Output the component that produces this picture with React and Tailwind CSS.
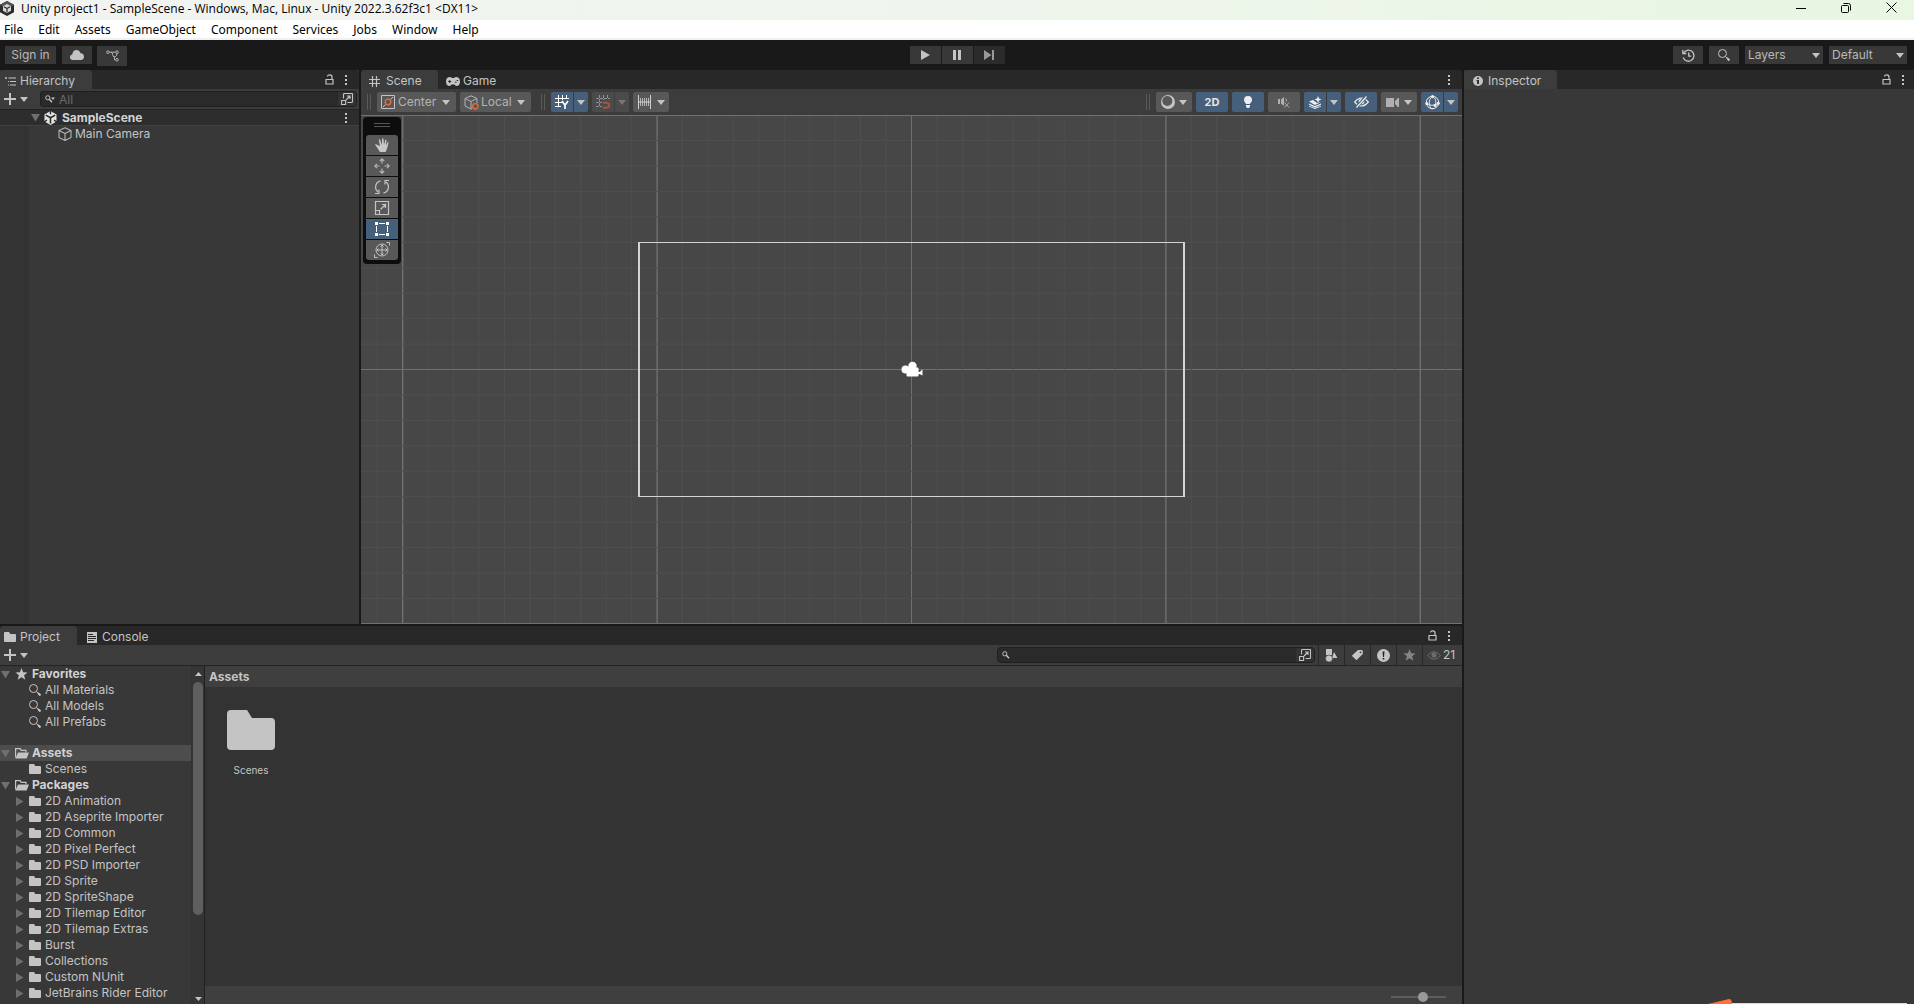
import React from "react";

const MENUS = ["File", "Edit", "Assets", "GameObject", "Component", "Services", "Jobs", "Window", "Help"];
const PACKAGES = [
  "2D Animation", "2D Aseprite Importer", "2D Common", "2D Pixel Perfect", "2D PSD Importer",
  "2D Sprite", "2D SpriteShape", "2D Tilemap Editor", "2D Tilemap Extras", "Burst",
  "Collections", "Custom NUnit", "JetBrains Rider Editor",
];

function Icon({ size = 16, className = "", children }) {
  return (
    <svg width={size} height={size} viewBox={`0 0 ${size} ${size}`} className={`shrink-0 ${className}`} fill="none" stroke="#c4c4c4" aria-hidden="true">
      {children}
    </svg>
  );
}

const Caret = ({ className = "text-[#c4c4c4]" }) => (
  <svg width="8" height="5" viewBox="0 0 8 5" className={`shrink-0 ${className}`} aria-hidden="true">
    <path d="M0 0h8L4 5z" fill="currentColor" />
  </svg>
);

const Dots = () => (
  <button aria-label="Menu" className="flex h-4 w-2 items-center justify-center">
    <svg width="2" height="10" viewBox="0 0 2 10"><path d="M0 0h2v2H0zM0 4h2v2H0zM0 8h2v2H0z" fill="#c4c4c4" /></svg>
  </button>
);

const Lock = () => (
  <button aria-label="Lock">
    <svg width="9" height="11" viewBox="0 0 9 11" fill="none" stroke="#c4c4c4" className="block">
      <path d="M1 5.500h7v4.500H1zM2.500 2.500C2.500 .3 7 .2 7 3v2.500" strokeWidth="1.200" />
    </svg>
  </button>
);

const Handle = () => <div className="h-4 w-1 shrink-0 border-x border-[#5a5a5a]" />;

const Plus = () => (
  <button aria-label="Create" className="flex items-center gap-1">
    <svg width="12" height="12" viewBox="0 0 12 12"><path d="M5 0h2v5h5v2H7v5H5V7H0V5h5z" fill="#c4c4c4" /></svg>
    <Caret />
  </button>
);

const Triangle = ({ open = false }) => (
  <svg width="9" height="9" viewBox="0 0 9 9" className="shrink-0" aria-hidden="true">
    <path d={open ? "M0 1h9L4.500 8.500z" : "M1 0v9l7.500-4.500z"} fill="#6f6f6f" />
  </svg>
);

const Folder = () => (
  <svg width="12" height="10" viewBox="0 0 12 10" className="shrink-0" aria-hidden="true">
    <path d="M0 1q0-1 1-1h4l1.300 2H11q1 0 1 1v6q0 1-1 1H1q-1 0-1-1z" fill="#c4c4c4" />
  </svg>
);

const OpenFolder = () => (
  <svg width="14" height="11" viewBox="0 0 14 11" className="shrink-0" fill="none" aria-hidden="true">
    <path d="M.6 9.500V.6h4.600l1 1.800h4.800v1.800" stroke="#c4c4c4" strokeWidth="1.200" />
    <path d="M3 4.500h11l-2.400 6H.4z" fill="#c4c4c4" />
  </svg>
);

const Magnifier = () => (
  <svg width="12" height="12" viewBox="0 0 12 12" className="shrink-0" fill="none" stroke="#c4c4c4" aria-hidden="true">
    <circle cx="4.500" cy="4.500" r="4" />
    <path d="M7.500 7.500l1.500 1.500" />
    <path d="M9 9l2.500 2.500" strokeWidth="2" />
  </svg>
);

const SmallMagnifier = ({ menu = false }) => (
  <svg width="10" height="8" viewBox="0 0 10 8" className="shrink-0" fill="none" stroke="#c4c4c4" aria-hidden="true">
    <circle cx="2.800" cy="2.800" r="2.100" />
    <path d="M4.300 4.300l2.700 2.900" strokeWidth="1.400" />
    {menu && <path d="M6 2.500h4L8 5z" fill="#c4c4c4" stroke="none" />}
  </svg>
);

const PopOut = () => (
  <svg width="12" height="12" viewBox="0 0 12 12" fill="none" stroke="#c4c4c4" aria-hidden="true">
    <path d="M2.500 5.500v-4q0-1 1-1h7q1 0 1 1v7q0 1-1 1h-4M.6 7.500h4v4h-4zM5 7l4-4M6 3h3v3" strokeWidth="1.100" />
  </svg>
);

const UnityMark = () => (
  <svg width="13" height="14" viewBox="0 0 13 14" className="shrink-0" fill="none" aria-hidden="true">
    <path d="M6.500 0L12.500 3.500v7L6.500 14 .5 10.500v-7z" fill="#e4e4e4" />
    <path d="M6.500 6.800v5.800M6.500 6.800L1.800 4.100M6.500 6.800l4.700-2.700" stroke="#2c2c2c" strokeWidth="1.600" />
    <path d="M6.500 0v3.200M0 11l3-1.800M13 11l-3-1.800" stroke="#2c2c2c" strokeWidth="1.400" />
  </svg>
);

const Cube = ({ className = "" }) => (
  <svg width="14" height="14" viewBox="0 0 14 14" className={`shrink-0 ${className}`} fill="none" stroke="#b4b4b4" strokeLinejoin="round" aria-hidden="true">
    <path d="M7 .7l6 2.800v7L7 13.400 1 10.500v-7zM1 3.500l6 2.900 6-2.900M7 6.400v7" strokeWidth="1.100" />
  </svg>
);

function Tab({ active, className = "", icon, children }) {
  return (
    <button role="tab" aria-selected={!!active} className={`flex h-full shrink-0 items-center gap-1 pt-[3px] ${active ? "rounded-t-[3px] bg-[#3c3c3c]" : ""} ${className}`}>
      {icon}
      <span>{children}</span>
    </button>
  );
}

const TabBar = ({ children }) => (
  <div role="tablist" className="flex h-[19px] shrink-0 rounded-t-[3px] bg-[#282828]">{children}</div>
);

function ToolButton({ on, label, className = "w-8", children }) {
  return (
    <button aria-label={label} className={`flex h-5 shrink-0 items-center justify-center rounded-[2px] ${on ? "bg-[#46607c]" : "bg-[#585858]"} ${className}`}>
      {children}
    </button>
  );
}

function SplitButton({ on, dim, label, children }) {
  const bg = on ? "bg-[#46607c]" : dim ? "bg-[#4b4b4b]" : "bg-[#585858]";
  return (
    <div className="flex gap-px">
      <button aria-label={label} className={`flex h-5 w-[22px] items-center justify-center rounded-l-[2px] ${bg}`}>{children}</button>
      <button aria-label={`${label} options`} className={`flex h-5 w-[14px] items-center justify-center rounded-r-[2px] ${bg}`}>
        <Caret className={dim ? "text-[#777]" : "text-[#c4c4c4]"} />
      </button>
    </div>
  );
}

function ModeSelect({ label, options, className, icon }) {
  return (
    <label className={`relative flex h-5 items-center rounded-[2px] bg-[#585858] pl-1 ${className}`}>
      {icon}
      <select aria-label={label} className="absolute inset-0 appearance-none bg-transparent pl-[21px] text-xs text-[#b4b4b4] outline-none">
        {options.map((o) => <option key={o}>{o}</option>)}
      </select>
      <span className="pointer-events-none absolute inset-y-0 right-1.5 flex items-center"><Caret /></span>
    </label>
  );
}

function TopSelect({ name }) {
  return (
    <label className="relative h-[18px] w-[78px] bg-[#383838]">
      <select aria-label={name} className="absolute inset-0 w-full appearance-none bg-transparent pl-[3px] text-xs text-[#b8b8b8] outline-none">
        <option>{name}</option>
      </select>
      <span className="pointer-events-none absolute inset-y-0 right-[3px] flex items-center"><Caret /></span>
    </label>
  );
}

function TitleBar() {
  return (
    <header className="flex h-5 shrink-0 items-start bg-linear-to-r from-[#f2f3f1] via-[#eff5ed] to-[#e8f6e2] text-black">
      <svg width="14" height="15" viewBox="0 0 14 15" className="mt-px shrink-0" fill="none" aria-hidden="true">
        <path d="M7 0l7 3.800v7.400L7 15 0 11.200V3.800z" fill="#2c2c2c" />
        <path d="M7 0l7 3.800-7 3.700-7-3.700z" fill="#555" />
        <path d="M7 3l4 2.200v4.600L7 12 3 9.800V5.200z" fill="#d8d8d8" />
        <path d="M7 7.500v3.700M7 7.500L4 5.800M7 7.500l3-1.700" stroke="#2c2c2c" strokeWidth="1.200" />
      </svg>
      <h1 className="ml-[7px] flex-1 font-['Open_Sans',sans-serif] text-xs leading-[17px]">
        Unity project1 - SampleScene - Windows, Mac, Linux - Unity 2022.3.62f3c1 &lt;DX11&gt;
      </h1>
      <div className="flex h-[15px]">
        <button aria-label="Minimize" className="flex w-[45px] items-center justify-center"><svg width="10" height="10" viewBox="0 0 10 10" stroke="#000"><path d="M0 5.500h10" /></svg></button>
        <button aria-label="Restore" className="flex w-[46px] items-center justify-center"><svg width="10" height="10" viewBox="0 0 10 10" fill="none" stroke="#000"><rect x=".5" y="2.500" width="7" height="7" rx="1" /><path d="M2.500.5h5q2 0 2 2v5" /></svg></button>
        <button aria-label="Close" className="flex w-[45px] items-center justify-center"><svg width="11" height="11" viewBox="0 0 11 11" stroke="#000"><path d="M.5.5l10 10M10.500.5l-10 10" /></svg></button>
      </div>
    </header>
  );
}

function MainToolbar() {
  const box = "flex h-[18px] w-[30px] items-center justify-center bg-[#383838]";
  return (
    <div className="grid h-[30px] shrink-0 grid-cols-[1fr_auto_1fr] bg-[#191919] pt-1.5">
      <div className="flex items-start pl-[5px]">
        <button className="h-[18px] w-[51px] bg-[#383838] text-[#b8b8b8]">Sign in</button>
        <button aria-label="Cloud services" className={`ml-1.5 ${box}`}>
          <svg width="14" height="10" viewBox="0 0 14 10"><path d="M3 10C1 10 0 8.700 0 7.200 0 5.700 1 4.700 2.300 4.500 2.400 2 4.200 0 6.500 0 8.700 0 10 1.300 10.600 3.300 12.800 3.400 14 5 14 6.700 14 8.600 12.700 10 11 10z" fill="#c4c4c4" /></svg>
        </button>
        <button aria-label="Version control" className="ml-[5px] flex h-5 w-[30px] items-center justify-center bg-[#383838]">
          <svg width="13" height="12" viewBox="0 0 13 12" fill="none" stroke="#b0b0b0">
            <circle cx="1.900" cy="2.200" r="1.300" /><circle cx="11" cy="2.200" r="1.300" /><circle cx="11" cy="9.800" r="1.300" />
            <path d="M3.200 2.200h6.500M5 2.200c2.500 0 1 4.800 3 4.800h.5v2.800h1.200M8 7c1.500 0 2.800-1 3-3.500" />
          </svg>
        </button>
      </div>
      <div className="flex items-start gap-px">
        <button aria-label="Play" className="flex h-[18px] w-[31px] items-center justify-center bg-[#383838]"><svg width="9" height="10" viewBox="0 0 9 10"><path d="M0 0l9 5-9 5z" fill="#c4c4c4" /></svg></button>
        <button aria-label="Pause" className="flex h-[18px] w-[31px] items-center justify-center bg-[#383838]"><svg width="8" height="10" viewBox="0 0 8 10"><path d="M0 0h3v10H0zM5 0h3v10H5z" fill="#c4c4c4" /></svg></button>
        <button aria-label="Step" className="flex h-[18px] w-[31px] items-center justify-center bg-[#2b2b2b]"><svg width="10" height="10" viewBox="0 0 10 10"><path d="M0 0l7.500 5L0 10zM8 0h2v10H8z" fill="#999" /></svg></button>
      </div>
      <div className="flex items-start justify-end gap-1.5 pr-[7px]">
        <button aria-label="Undo history" className={box}>
          <svg width="13" height="13" viewBox="0 0 13 13" fill="none" stroke="#c4c4c4"><path d="M1.500 4.200A5.500 5.500 0 1 1 1.200 8.500" strokeWidth="1.300" /><path d="M.8 1v3.500h3.500M6.700 3.500v3.700h2.500" strokeWidth="1.300" /></svg>
        </button>
        <button aria-label="Search" className={box}><Magnifier /></button>
        <TopSelect name="Layers" />
        <TopSelect name="Default" />
      </div>
    </div>
  );
}

function Hierarchy() {
  return (
    <section aria-label="Hierarchy" className="flex w-[359px] shrink-0 flex-col bg-[#383838]">
      <TabBar>
        <Tab active className="w-[92px] pl-[5px]" icon={
          <svg width="11" height="9" viewBox="0 0 11 9" stroke="#c4c4c4"><path d="M0 1h2M3.500 1H11M3 4.500h1M5 4.500h6M3 8h1M5 8h6M1 0v2" /></svg>
        }>Hierarchy</Tab>
        <div className="ml-auto flex items-center gap-2 pr-[9px]"><Lock /><Dots /></div>
      </TabBar>
      <div className="flex h-[21px] shrink-0 items-center border-b border-[#232323] bg-[#3c3c3c] pr-0.5 pl-1">
        <Plus />
        <div className="ml-3 flex h-4 flex-1 items-center overflow-hidden rounded-[3px] border border-[#1f1f1f] bg-[#2a2a2a] pl-1">
          <SmallMagnifier menu />
          <input aria-label="Search hierarchy" placeholder="All" className="ml-1 min-w-0 flex-1 bg-transparent text-xs leading-3 text-[#c4c4c4] outline-none placeholder:text-[#6a6a6a]" />
          <button aria-label="Open in search" className="flex h-full w-[18px] items-center justify-center bg-[#333]"><PopOut /></button>
        </div>
      </div>
      <div className="flex h-4 shrink-0 items-center border-b border-[#414141] bg-[#2d2d2d] pr-[9px] pl-[31px] font-bold text-[#d4d4d4]">
        <Triangle open />
        <span className="ml-1 flex flex-1 items-center gap-[5px]"><UnityMark />SampleScene</span>
        <Dots />
      </div>
      <div className="flex min-h-0 flex-1">
        <div className="w-[29px] bg-[#333]" />
        <div className="flex h-4 items-center gap-[3px] pl-[29px]"><Cube />Main Camera</div>
      </div>
    </section>
  );
}

/* World grid around the origin: 10 minor cells per major cell, with the camera frame on top. */
function SceneGrid() {
  const cell = 25.44;
  const steps = Array.from({ length: 81 }, (_, i) => i - 40);
  return (
    <svg className="absolute inset-0 h-full w-full bg-[#474747]" role="img" aria-label="Scene view">
      <svg x="50%" y="50%" overflow="visible">
        {steps.map((i) => (
          <g key={i}>
            <path d={`M${i * cell} -600V600`} stroke={i % 10 === 0 ? "#707070" : "#4f4f4f"} strokeWidth={i % 10 === 0 && i !== 0 ? 1.4 : 1} />
            <path d={`M-1200 ${i * cell}H1200`} stroke={i === 0 ? "#707070" : "#4f4f4f"} />
          </g>
        ))}
        <path d="M-272.500-127.500V127.500M272.500-127.500V127.500" stroke="#d4d4d4" strokeWidth="2" />
        <path d="M-273-127H273M-273 127H273" stroke="#d4d4d4" />
        <g fill="#fff">
          <circle cx="-6" cy="0" r="4" /><circle cx="1" cy="-3.500" r="4.200" />
          <rect x="-5" y="-2" width="12" height="9" rx="1" /><path d="M6 2l2 .5L11 0v6L8 4.500 6 5z" />
        </g>
      </svg>
    </svg>
  );
}

const TOOLS = [
  ["Hand", <path key="p" d="M4.500 8.500L1.700 7q-.8.300-.3 1L5 13.500q.5 1.500 1.500 1.500H11q1 0 1.300-1.500L13.500 10 14.600 5.500q-.2-1-1-.3L12 8.500 12.500 3q-.5-1-1.300 0L10 8 9.500 1.700q-.7-1-1.400 0L7.800 8 6 2.500q-.9-.7-1.300.2L6 9z" fill="#c8c8c8" stroke="none" />],
  ["Move", <g key="p" stroke="#b4b4b4" strokeWidth="1.200"><path d="M8 1v4.500M8 10.500V15M1 8h4.500M10.500 8H15M5.800 3L8 .8 10.200 3M5.800 13L8 15.200l2.200-2.200M3 5.800L.8 8 3 10.200M13 5.800L15.200 8 13 10.200" /></g>],
  ["Rotate", <g key="p" strokeWidth="1.200"><path d="M6.500 1.800A6.400 6.400 0 0 0 4 13M9.500 14.200A6.400 6.400 0 0 0 12 3M1 14.500h4v-4M15 1.500h-4v4" /></g>],
  ["Scale", <g key="p"><path d="M1.500 1.500h13v13h-13zM1.500 10.500h4v4M6.500 9.500L12 4M8 4.500h3.500V8" strokeWidth="1.200" /></g>],
  ["Rect", <g key="p"><path d="M5 2.500h6M5 13.500h6M2.500 5v6M13.500 5v6" stroke="#fff" /><path d="M1 1h3v3H1zM12 1h3v3h-3zM1 12h3v3H1zM12 12h3v3h-3z" fill="#fff" stroke="none" /></g>],
  ["Transform", <g key="p"><circle cx="8" cy="8" r="6" /><path d="M8 3v10M3 8h10M6.500 4.500L8 3l1.500 1.500M6.500 11.500L8 13l1.500-1.500M4.500 6.500L3 8l1.500 1.500M11.500 6.500L13 8l-1.500 1.500" /><path d="M12.500.5h3v3M.5 12.500v3h3" /></g>],
];

function Scene() {
  return (
    <section aria-label="Scene" className="flex min-w-0 flex-1 flex-col">
      <TabBar>
        <Tab active className="w-[77px] gap-[6px] pl-2" icon={
          <svg width="11" height="11" viewBox="0 0 11 11" stroke="#c4c4c4"><path d="M3.500 0v11M7.500 0v11M0 3.500h11M0 7.500h11" strokeWidth="1.200" /></svg>
        }>Scene</Tab>
        <Tab className="gap-[3px] pl-2" icon={
          <svg width="14" height="9" viewBox="0 0 14 9"><path d="M3.500 0Q5 0 6 1h2q1-1 2.500-1Q14 .4 14 4.500T11 9Q9.500 9 8.500 7.500h-3Q4.500 9 3 9 0 8.600 0 4.500T3.500 0z" fill="#c4c4c4" /><path d="M2.200 4.500h3M3.700 3v3M9 5.200h1.500M10.700 3.500h1.500" stroke="#282828" /></svg>
        }>Game</Tab>
        <div className="ml-auto flex items-center pr-[9px]"><Dots /></div>
      </TabBar>

      <div className="flex h-[26px] shrink-0 items-center gap-1 bg-[#3c3c3c] pr-1 pl-1.5">
        <Handle />
        <div className="ml-0.5 flex gap-1">
          <ModeSelect label="Tool handle position" options={["Center", "Pivot"]} className="w-[79px]" icon={
            <svg width="14" height="14" viewBox="0 0 14 14" fill="none" stroke="#c4c4c4"><path d="M.5.5h13v13H.5zM2 12l2.500-2.500M9.500 4.500L12 2" /><circle cx="7" cy="7" r="2.800" stroke="#f0683c" strokeWidth="1.300" /></svg>
          } />
          <ModeSelect label="Tool handle rotation" options={["Local", "Global"]} className="w-[71px]" icon={
            <svg width="15" height="15" viewBox="0 0 15 15" fill="none" stroke="#b4b4b4" strokeLinejoin="round"><path d="M8 13.500l-1 .5-6-3V3.500L7 .8l6 2.700V8M1 3.500l6 2.900 6-2.900M7 6.400V14" /><circle cx="11.300" cy="11.300" r="2.700" stroke="#f0683c" strokeWidth="1.300" /></svg>
          } />
        </div>
        <div className="ml-1.5"><Handle /></div>
        <div className="ml-0.5 flex gap-1">
          <SplitButton on label="Grid visibility">
            <Icon><path d="M4.500 1v12M8.500 1v5M12.500 1v4M1 4.500h14M1 8.500h7M1 12.500h6" stroke="#fff" /><path d="M8 7l3 4.200L14 7M11 11v4" stroke="#fff" strokeWidth="1.700" /></Icon>
          </SplitButton>
          <SplitButton dim label="Grid snapping">
            <Icon><path d="M4.500 1v12M8.500 1v5M12.500 1v4M1 4.500h14M1 8.500h6M1 12.500h6" stroke="#909090" strokeDasharray="3 1" /><path d="M8 8.700h3.500a2.500 2.500 0 0 1 0 5H8" stroke="#a8553d" strokeWidth="2" /></Icon>
          </SplitButton>
          <ToolButton label="Snap increment" className="w-9 gap-1.5">
            <svg width="13" height="14" viewBox="0 0 13 14" stroke="#d0d0d0"><path d="M.5 0v14M12.500 0v14M0 7h13" /><path d="M2.500 3v8M4.500 3v8M6.500 3v8M8.500 3v8M10.500 3v8" strokeOpacity=".8" /></svg>
            <Caret />
          </ToolButton>
        </div>
        <div className="ml-auto"><Handle /></div>
        <div className="ml-0.5 flex gap-1">
          <ToolButton label="Draw mode" className="w-9 gap-1">
            <svg width="14" height="14" viewBox="0 0 14 14"><circle cx="7" cy="7" r="7" fill="#c4c4c4" /><circle cx="6.300" cy="6" r="5" fill="#585858" /></svg>
            <Caret />
          </ToolButton>
          <ToolButton on label="2D view"><span className="text-[11px] font-bold text-[#e4e4e4]">2D</span></ToolButton>
          <ToolButton on label="Scene lighting">
            <svg width="8" height="12" viewBox="0 0 8 12" fill="#eee"><path d="M4 0a4 4 0 0 1 4 4c0 2-1.500 2.500-2 4H2C1.500 6.500 0 6 0 4a4 4 0 0 1 4-4zM2 9h4v1.500L5 12H3l-1-1.500z" /></svg>
          </ToolButton>
          <ToolButton label="Audio">
            <svg width="12" height="11" viewBox="0 0 12 11" fill="#b0b0b0"><path d="M0 2h2v5H0zM3 2.500L6 0v9L3 6.500z" /><path d="M6.500 5.500l4.500 5M11 5.500l-4.500 5M7.500 1.500q1.500 1 1 3" stroke="#b0b0b0" fill="none" /></svg>
          </ToolButton>
          <SplitButton on label="Effects">
            <svg width="13" height="13" viewBox="0 0 13 13" fill="#eee"><path d="M0 5.500L4 4l4 3 4-1-6 3zM0 7.500l6 2.500 6-2.500v1.200L6 11.500 0 8.700zM0 9.800l6 2.200 6-2.200v.8L6 13 0 10.600zM9 0l1 2.500L12.500 3.500 10 4.500 9 7 8 4.500 5.500 3.500 8 2.500z" /></svg>
          </SplitButton>
          <ToolButton on label="Hidden objects">
            <svg width="15" height="12" viewBox="0 0 15 12" fill="none" stroke="#eee"><path d="M.7 6Q7.500-2 14.300 6 7.500 14 .7 6z" strokeWidth="1.200" /><circle cx="7.500" cy="5.500" r="2.500" fill="#eee" /><path d="M2 12L12.500 0" stroke="#46607c" strokeWidth="3" /><path d="M2.500 11.500L12.500.5" strokeWidth="1.200" /></svg>
          </ToolButton>
          <ToolButton label="Camera settings" className="w-9 gap-[5px]">
            <svg width="13" height="9" viewBox="0 0 13 9" fill="#b0b0b0"><path d="M0 0h8v9H0zM9 3l3-3h1v9h-1L9 6z" /></svg>
            <Caret />
          </ToolButton>
          <SplitButton on label="Gizmos">
            <svg width="15" height="15" viewBox="0 0 15 15" className="shrink-0" fill="none" stroke="#eee"><circle cx="7.500" cy="7.500" r="6.200" /><path d="M7.500 1.300Q3.500 4 4.500 9.500T8 13.500M7.500 1.300q5 3.200 2.500 9M1.500 8.500q5 3.500 12 0" strokeWidth=".9" /><g fill="#eee" stroke="none"><circle cx="7.500" cy="1.600" r="1.600" /><circle cx="1.800" cy="8.500" r="1.500" /><circle cx="13.200" cy="8.300" r="1.500" /><circle cx="10" cy="10.500" r="1.500" /></g></svg>
          </SplitButton>
        </div>
      </div>

      <div className="relative min-h-0 flex-1 overflow-hidden border-y border-[#707070]">
        <SceneGrid />
        <div className="absolute top-px left-0.5 flex flex-col rounded-[4px] bg-[#0d0d0d] px-[3px] pb-1">
          <div className="flex h-[18px] justify-center pt-1.5"><div className="h-1 w-4 border-y border-[#555]" /></div>
          <div className="flex flex-col gap-px overflow-hidden rounded-[3px]">
            {TOOLS.map(([name, art]) => (
              <button key={name} aria-label={`${name} tool`} aria-pressed={name === "Rect"} className={`flex h-5 w-8 items-center justify-center ${name === "Rect" ? "bg-[#46607c]" : "bg-[#585858]"}`}>
                <Icon>{art}</Icon>
              </button>
            ))}
          </div>
        </div>
      </div>
    </section>
  );
}

function TreeRow({ level = 0, open, icon, bold, selected, children }) {
  const pad = level === 0 ? "pl-px" : open === undefined ? "pl-[29px]" : "pl-[15px]";
  return (
    <li className={`flex h-4 shrink-0 items-center whitespace-nowrap ${pad} ${bold ? "font-bold text-[#d2d2d2]" : ""} ${selected ? "bg-[#4d4d4d]" : ""}`}>
      {open !== undefined && <span className="mr-[5px]"><Triangle open={open} /></span>}
      <span className={`flex items-center ${level === 0 ? "gap-[3px]" : "gap-1"}`}>{icon}{children}</span>
    </li>
  );
}

const Arrow = ({ down }) => (
  <svg width="7" height="4" viewBox="0 0 7 4" className="block" aria-hidden="true"><path d={down ? "M0 0h7L3.500 4z" : "M0 4h7L3.500 0z"} fill="#c4c4c4" /></svg>
);

function Project() {
  const cell = "flex w-[26px] items-center justify-center border-l border-[#282828]";
  return (
    <section aria-label="Project" className="flex min-h-0 flex-[378_378_0%] flex-col">
      <TabBar>
        <Tab active className="w-[77px] pl-1" icon={<Folder />}>Project</Tab>
        <Tab className="gap-[5px] pl-2.5" icon={
          <svg width="10" height="11" viewBox="0 0 10 11"><path d="M0 0h10v11H0z" fill="#c4c4c4" /><path d="M1 2.500h5M1 4.500h8M1 6.500h8M1 8.500h6" stroke="#282828" /></svg>
        }>Console</Tab>
        <div className="ml-auto flex items-center gap-2 pr-[9px]"><Lock /><Dots /></div>
      </TabBar>
      <div className="flex h-[21px] shrink-0 items-stretch border-b border-[#232323] bg-[#3c3c3c] pl-1">
        <Plus />
        <div className="mt-0.5 mr-[3px] ml-auto flex h-4 w-[318px] items-center overflow-hidden rounded-[4px] border border-[#1f1f1f] bg-[#2a2a2a] pl-1">
          <SmallMagnifier />
          <input aria-label="Search project" className="min-w-0 flex-1 bg-transparent text-xs leading-3 text-[#c4c4c4] outline-none" />
          <button aria-label="Open in search" className="flex h-full w-[18px] items-center justify-center bg-[#333]"><PopOut /></button>
        </div>
        <button aria-label="Search by type" className={cell}>
          <svg width="13" height="13" viewBox="0 0 13 13" fill="#c4c4c4"><path d="M1 0h6v6H1zM9 3l3.500 6H7z" /><circle cx="4" cy="9.500" r="3.500" stroke="#3c3c3c" strokeWidth=".6" /></svg>
        </button>
        <button aria-label="Search by label" className={cell}>
          <svg width="11" height="10" viewBox="0 0 11 10"><path d="M6 0h3.500q1.300 0 1.300 1.300V4L5 9.700q-.5.500-1 0L.3 6.300q-.5-.5 0-1z" fill="#c4c4c4" /><circle cx="8.500" cy="2.300" r=".9" fill="#3c3c3c" /></svg>
        </button>
        <button aria-label="Search by import log" className={cell}>
          <svg width="13" height="13" viewBox="0 0 13 13"><circle cx="6.500" cy="6.500" r="6.500" fill="#c4c4c4" /><path d="M5.500 2.500h2L7 8H6zM5.700 9h1.600v1.600H5.700z" fill="#222" /></svg>
        </button>
        <button aria-label="Save search" className={cell}>
          <svg width="13" height="12" viewBox="0 0 13 12"><path d="M6.500 0l1.600 4.200 4.400.3-3.400 2.800 1.200 4.400-3.800-2.500-3.800 2.500 1.200-4.400L.5 4.500l4.400-.3z" fill="#858585" /></svg>
        </button>
        <button aria-label="Hidden packages" className="flex w-10 items-center gap-0.5 border-l border-[#282828] pl-1">
          <svg width="14" height="9" viewBox="0 0 14 9" className="shrink-0" fill="none" stroke="#6c6c6c"><path d="M.6 4.500Q7-3 13.400 4.500 7 12 .6 4.500z" /><circle cx="7" cy="4" r="2.600" fill="#6c6c6c" stroke="none" /></svg>
          21
        </button>
      </div>
      <div className="flex min-h-0 flex-1">
        <ul className="flex w-[191px] flex-col overflow-hidden bg-[#383838]">
          <TreeRow open bold icon={<svg width="13" height="12" viewBox="0 0 13 12" className="mr-px"><path d="M6.500 0l1.600 4.200 4.400.3-3.400 2.800 1.200 4.400-3.800-2.500-3.800 2.500 1.200-4.400L.5 4.500l4.400-.3z" fill="#c4c4c4" /></svg>}>Favorites</TreeRow>
          {["All Materials", "All Models", "All Prefabs"].map((n) => <TreeRow key={n} level={1} icon={<Magnifier />}>{n}</TreeRow>)}
          <li aria-hidden="true" className="h-[15px] shrink-0" />
          <TreeRow open bold selected icon={<OpenFolder />}>Assets</TreeRow>
          <TreeRow level={1} icon={<Folder />}>Scenes</TreeRow>
          <TreeRow open bold icon={<OpenFolder />}>Packages</TreeRow>
          {PACKAGES.map((n) => <TreeRow key={n} level={1} open={false} icon={<Folder />}>{n}</TreeRow>)}
        </ul>
        <div className="flex w-3.5 flex-col items-center border-r border-l border-r-[#202020] border-l-[#323232] bg-[#353535] pt-1.5 pb-[3px]">
          <Arrow />
          <div className="mt-1.5 flex-1"><div className="h-[74%] w-2.5 rounded-full bg-[#5f5f5f]" /></div>
          <Arrow down />
        </div>
        <div className="flex min-w-0 flex-1 flex-col bg-[#333]">
          <div className="flex h-[21px] items-center bg-[#3f3f3f] pl-1 font-bold">Assets</div>
          <div className="flex-1 px-3.5 pt-[23px]">
            <button className="flex w-16 flex-col items-center gap-3 text-[10px]">
              <svg width="48" height="40" viewBox="0 0 48 40"><path d="M0 4q0-4 4-4h16l5 8h19q4 0 4 4v24q0 4-4 4H4q-4 0-4-4z" fill="#c4c4c4" /></svg>
              Scenes
            </button>
          </div>
          <div className="flex h-[18px] items-center justify-end bg-[#3f3f3f] pt-1 pr-4">
            <input type="range" aria-label="Icon size" defaultValue="60" className="h-0.5 w-[55px] appearance-none bg-[#5e5e5e] [&::-webkit-slider-thumb]:size-2.5 [&::-webkit-slider-thumb]:appearance-none [&::-webkit-slider-thumb]:rounded-full [&::-webkit-slider-thumb]:bg-[#999]" />
          </div>
        </div>
      </div>
    </section>
  );
}

function Inspector() {
  return (
    <section aria-label="Inspector" className="flex w-[450px] shrink-0 flex-col bg-[#383838]">
      <TabBar>
        <Tab active className="w-[93px] gap-[5px] pl-[9px]" icon={
          <svg width="10" height="10" viewBox="0 0 10 10"><circle cx="5" cy="5" r="5" fill="#c4c4c4" /><path d="M4 1.500h2v1.500H4zM3.500 4H6v4H4V5h-.5z" fill="#333" /></svg>
        }>Inspector</Tab>
        <div className="ml-auto flex items-center gap-2 pr-[7px]"><Lock /><Dots /></div>
      </TabBar>
    </section>
  );
}

export default function App() {
  return (
    <div className="relative flex h-screen flex-col overflow-hidden bg-[#191919] font-['Inter',sans-serif] text-xs leading-4 text-[#c4c4c4]">
      <TitleBar />
      <nav className="flex h-5 shrink-0 items-center gap-[15px] border-b-2 border-[#f0f0f0] bg-white pt-0.5 pl-1 font-['Noto_Sans','Open_Sans',sans-serif] text-black">
        {MENUS.map((m) => <button key={m}>{m}</button>)}
      </nav>
      <MainToolbar />
      <main className="flex min-h-0 flex-1 gap-0.5">
        <div className="flex min-w-0 flex-1 flex-col gap-0.5">
          <div className="flex min-h-0 flex-[554_554_0%] gap-0.5">
            <Hierarchy />
            <Scene />
          </div>
          <Project />
        </div>
        <Inspector />
      </main>
      <div className="absolute right-[7px] bottom-0 flex items-end">
        <svg width="24" height="5" viewBox="0 0 24 5"><path d="M0 5L21 0q3 0 3 5z" fill="#ff6f3c" /></svg>
        <div className="h-px w-[175px] bg-[#d5dae6]" />
      </div>
    </div>
  );
}
